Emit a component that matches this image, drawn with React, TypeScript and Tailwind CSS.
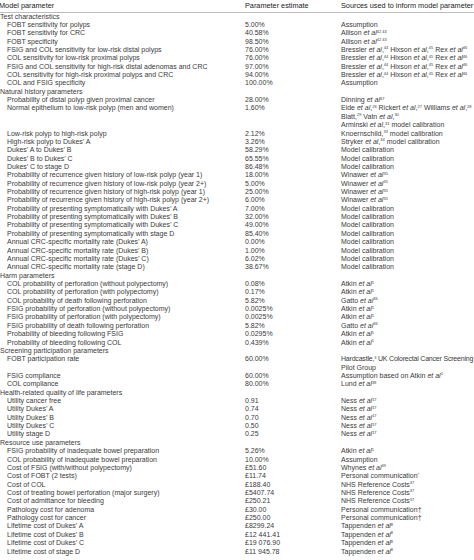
import React from 'react';

type Row = {
  label: string;
  value?: string;
  source?: React.ReactNode[];
  section?: boolean;
};

function Sup({ children }: { children: React.ReactNode }) {
  return <span className="relative -top-[2.5px] text-[4px] leading-none">{children}</span>;
}

function Ref({ name, n, comma }: { name: string; n?: string; comma?: boolean }) {
  return (
    <>
      {name} <i>et al</i>
      {comma ? ',' : ''}
      {n && <Sup>{n}</Sup>}
    </>
  );
}

const bressler = [
  <>
    <Ref name="Bressler" n="44" comma /> <Ref name="Hixson" n="45" comma /> <Ref name="Rex" n="46" />
  </>,
];
const allison = [<Ref name="Allison" n="42 43" />];
const calib = ['Model calibration'];
const winawer = [<Ref name="Winawer" n="35" />];
const atkin = [<Ref name="Atkin" n="1" />];
const gatto = [<Ref name="Gatto" n="36" />];
const ness = [<Ref name="Ness" n="17" />];
const nhs = [
  <>
    NHS Reference Costs<Sup>37</Sup>
  </>,
];
const tappenden = [<Ref name="Tappenden" n="8" />];

const rows: Row[] = [
  { label: 'Test characteristics', section: true },
  { label: 'FOBT sensitivity for polyps', value: '5.00%', source: ['Assumption'] },
  { label: 'FOBT sensitivity for CRC', value: '40.58%', source: allison },
  { label: 'FOBT specificity', value: '98.50%', source: allison },
  { label: 'FSIG and COL sensitivity for low-risk distal polyps', value: '76.00%', source: bressler },
  { label: 'COL sensitivity for low-risk proximal polyps', value: '76.00%', source: bressler },
  { label: 'FSIG and COL sensitivity for high-risk distal adenomas and CRC', value: '97.00%', source: bressler },
  { label: 'COL sensitivity for high-risk proximal polyps and CRC', value: '94.00%', source: bressler },
  { label: 'COL and FSIG specificity', value: '100.00%', source: ['Assumption'] },
  { label: 'Natural history parameters', section: true },
  { label: 'Probability of distal polyp given proximal cancer', value: '28.00%', source: [<Ref name="Dinning" n="47" />] },
  {
    label: 'Normal epithelium to low-risk polyp (men and women)',
    value: '1.60%',
    source: [
      <>
        <Ref name="Eide" n="26" comma /> <Ref name="Rickert" n="27" comma /> <Ref name="Williams" n="28" comma />
      </>,
      <>
        Blatt,<Sup>29</Sup> <Ref name="Vatn" n="30" comma />
      </>,
      <>
        <Ref name="Arminski" n="31" comma /> model calibration
      </>,
    ],
  },
  {
    label: 'Low-risk polyp to high-risk polyp',
    value: '2.12%',
    source: [
      <>
        Knoernschild,<Sup>33</Sup> model calibration
      </>,
    ],
  },
  {
    label: 'High-risk polyp to Dukes’ A',
    value: '3.26%',
    source: [
      <>
        <Ref name="Stryker" n="34" comma /> model calibration
      </>,
    ],
  },
  { label: 'Dukes’ A to Dukes’ B', value: '58.29%', source: calib },
  { label: 'Dukes’ B to Dukes’ C', value: '65.55%', source: calib },
  { label: 'Dukes’ C to stage D', value: '86.48%', source: calib },
  { label: 'Probability of recurrence given history of low-risk polyp (year 1)', value: '18.00%', source: winawer },
  { label: 'Probability of recurrence given history of low-risk polyp (year 2+)', value: '5.00%', source: winawer },
  { label: 'Probability of recurrence given history of high-risk polyp (year 1)', value: '25.00%', source: winawer },
  { label: 'Probability of recurrence given history of high-risk polyp (year 2+)', value: '6.00%', source: winawer },
  { label: 'Probability of presenting symptomatically with Dukes’ A', value: '7.00%', source: calib },
  { label: 'Probability of presenting symptomatically with Dukes’ B', value: '32.00%', source: calib },
  { label: 'Probability of presenting symptomatically with Dukes’ C', value: '49.00%', source: calib },
  { label: 'Probability of presenting symptomatically with stage D', value: '85.40%', source: calib },
  { label: 'Annual CRC-specific mortality rate (Dukes’ A)', value: '0.00%', source: calib },
  { label: 'Annual CRC-specific mortality rate (Dukes’ B)', value: '1.00%', source: calib },
  { label: 'Annual CRC-specific mortality rate (Dukes’ C)', value: '6.02%', source: calib },
  { label: 'Annual CRC-specific mortality rate (stage D)', value: '38.67%', source: calib },
  { label: 'Harm parameters', section: true },
  { label: 'COL probability of perforation (without polypectomy)', value: '0.08%', source: atkin },
  { label: 'COL probability of perforation (with polypectomy)', value: '0.17%', source: atkin },
  { label: 'COL probability of death following perforation', value: '5.82%', source: gatto },
  { label: 'FSIG probability of perforation (without polypectomy)', value: '0.0025%', source: atkin },
  { label: 'FSIG probability of perforation (with polypectomy)', value: '0.0025%', source: atkin },
  { label: 'FSIG probability of death following perforation', value: '5.82%', source: gatto },
  { label: 'Probability of bleeding following FSIG', value: '0.0295%', source: atkin },
  { label: 'Probability of bleeding following COL', value: '0.439%', source: atkin },
  { label: 'Screening participation parameters', section: true },
  {
    label: 'FOBT participation rate',
    value: '60.00%',
    source: [
      <span className="tracking-[-0.2px]">
        Hardcastle,<Sup>3</Sup> UK Colorectal Cancer Screening
      </span>,
      'Pilot Group',
    ],
  },
  {
    label: 'FSIG compliance',
    value: '60.00%',
    source: [
      <>
        Assumption based on <Ref name="Atkin" n="1" />
      </>,
    ],
  },
  { label: 'COL compliance', value: '80.00%', source: [<Ref name="Lund" n="38" />] },
  { label: 'Health-related quality of life parameters', section: true },
  { label: 'Utility cancer free', value: '0.91', source: ness },
  { label: 'Utility Dukes’ A', value: '0.74', source: ness },
  { label: 'Utility Dukes’ B', value: '0.70', source: ness },
  { label: 'Utility Dukes’ C', value: '0.50', source: ness },
  { label: 'Utility stage D', value: '0.25', source: ness },
  { label: 'Resource use parameters', section: true },
  { label: 'FSIG probability of inadequate bowel preparation', value: '5.26%', source: atkin },
  { label: 'COL probability of inadequate bowel preparation', value: '10.00%', source: ['Assumption'] },
  { label: 'Cost of FSIG (with/without polypectomy)', value: '£51.60', source: [<Ref name="Whynes" n="39" />] },
  {
    label: 'Cost of FOBT (2 tests)',
    value: '£11.74',
    source: [
      <>
        Personal communication<Sup>*</Sup>
      </>,
    ],
  },
  { label: 'Cost of COL', value: '£188.40', source: nhs },
  { label: 'Cost of treating bowel perforation (major surgery)', value: '£5407.74', source: nhs },
  { label: 'Cost of admittance for bleeding', value: '£250.21', source: nhs },
  { label: 'Pathology cost for adenoma', value: '£30.00', source: ['Personal communication†'] },
  { label: 'Pathology cost for cancer', value: '£250.00', source: ['Personal communication†'] },
  { label: 'Lifetime cost of Dukes’ A', value: '£8299.24', source: tappenden },
  { label: 'Lifetime cost of Dukes’ B', value: '£12 441.41', source: tappenden },
  { label: 'Lifetime cost of Dukes’ C', value: '£19 076.90', source: tappenden },
  { label: 'Lifetime cost of stage D', value: '£11 945.78', source: tappenden },
];

export default function App() {
  return (
    <div
      className="h-[560px] w-[474px] overflow-hidden bg-white text-[7px] leading-[8.36px] text-[#3a3a3a]"
      style={{ fontFamily: '"Liberation Sans", Arial, sans-serif' }}
    >
      <div className="grid h-[12.5px] grid-cols-[245px_96px_1fr] items-center border-b-[1.5px] border-[#bdbdbd] text-[7.3px] text-[#222]">
        <span className="-ml-[1px]">Model parameter</span>
        <span>Parameter estimate</span>
        <span>Sources used to inform model parameter</span>
      </div>
      <div className="grid grid-cols-[245px_96px_1fr]">
        {rows.map((row, i) =>
          row.section ? (
            <div key={i} className="col-span-3 h-[8.36px] whitespace-nowrap">
              {row.label}
            </div>
          ) : (
            <React.Fragment key={i}>
              <div className="whitespace-nowrap pl-[7px]">{row.label}</div>
              <div className="whitespace-nowrap">{row.value}</div>
              <div className="whitespace-nowrap">
                {row.source?.map((line, j) => (
                  <div key={j} className="h-[8.36px]">
                    {line}
                  </div>
                ))}
              </div>
            </React.Fragment>
          ),
        )}
      </div>
    </div>
  );
}
